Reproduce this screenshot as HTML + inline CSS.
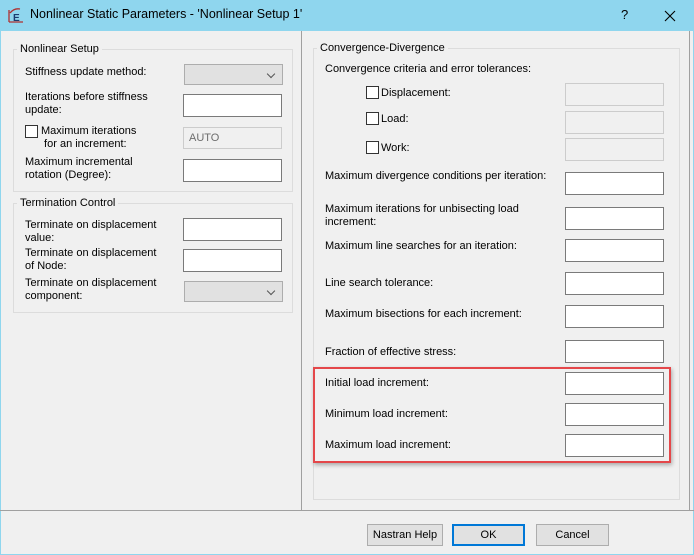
<!DOCTYPE html><html><head><style>
*{margin:0;padding:0;box-sizing:border-box}
body{width:694px;height:555px;background:#f0f0f0;font-family:"Liberation Sans",Tahoma,sans-serif;font-size:11px;color:#000;position:relative;overflow:hidden}
.a{position:absolute}
.t{position:absolute;line-height:13px;white-space:nowrap}
.g{position:absolute;border:1px solid #dcdcdc}
.lg{position:absolute;background:#f0f0f0;padding:0 3px;line-height:13px}
.in{position:absolute;background:#fff;border:1px solid #7a7a7a;width:99px;height:23px}
.dis{position:absolute;background:#f0f0f0;border:1px solid #cccccc;width:99px;height:23px}
.sel{position:absolute;background:#e1e1e1;border:1px solid #adadad;width:99px;height:21px}
.sel:after{content:"";position:absolute;right:8px;top:6px;width:5px;height:5px;border-right:1px solid #555;border-bottom:1px solid #555;transform:rotate(45deg)}
.cb{position:absolute;width:13px;height:13px;border:1px solid #333;background:#fff}
.btn{position:absolute;background:#e1e1e1;border:1px solid #adadad;height:22px;text-align:center;line-height:20px}
</style></head><body>
<div class="a" style="left:0;top:0;width:694px;height:31px;background:#8fd6ee"></div>
<div class="a" style="left:0;top:0;width:1px;height:555px;background:#8fd6ee"></div>
<div class="a" style="right:0;top:0;width:1px;height:555px;background:#8fd6ee"></div>
<div class="a" style="left:0;bottom:0;width:694px;height:1px;background:#8fd6ee"></div>
<svg class="a" style="left:8px;top:7px" width="16" height="16"><path d="M1 15V3M1 15H15M2 6Q6 1 12 2" stroke="#b03030" fill="none" stroke-width="1.3"/><text x="5" y="14" font-size="10" font-family="Liberation Sans" fill="#1a3c70" font-weight="bold">E</text></svg>
<div class="t" style="left:30px;top:8px;font-size:12.5px">Nonlinear Static Parameters - 'Nonlinear Setup 1'</div>
<div class="t" style="left:621px;top:8px;font-size:13px">?</div>
<svg class="a" style="left:664px;top:10px" width="12" height="12"><path d="M1 1L11 11M11 1L1 11" stroke="#000" stroke-width="1.1"/></svg>
<div class="a" style="left:301px;top:31px;width:1px;height:480px;background:#a0a0a0"></div>
<div class="a" style="left:689px;top:31px;width:1px;height:480px;background:#a0a0a0"></div>
<div class="a" style="left:0;top:510px;width:694px;height:1px;background:#a0a0a0"></div>

<div class="g" style="left:13px;top:49px;width:280px;height:143px"></div>
<div class="lg" style="left:17px;top:43px">Nonlinear Setup</div>
<div class="t" style="left:25px;top:66px">Stiffness update method:</div>
<div class="sel" style="left:184px;top:64px"></div>
<div class="t" style="left:25px;top:91px">Iterations before stiffness<br>update:</div>
<div class="in" style="left:183px;top:94px"></div>
<div class="cb" style="left:25px;top:125px"></div>
<div class="t" style="left:41px;top:125px">Maximum iterations<br>&nbsp;for an increment:</div>
<div class="dis" style="left:183px;top:127px;height:22px"><span class="t" style="left:5px;top:4px;color:#6d6d6d">AUTO</span></div>
<div class="t" style="left:25px;top:156px">Maximum incremental<br>rotation (Degree):</div>
<div class="in" style="left:183px;top:159px"></div>

<div class="g" style="left:13px;top:203px;width:280px;height:110px"></div>
<div class="lg" style="left:17px;top:197px">Termination Control</div>
<div class="t" style="left:25px;top:219px">Terminate on displacement<br>value:</div>
<div class="in" style="left:183px;top:218px"></div>
<div class="t" style="left:25px;top:247px">Terminate on displacement<br>of Node:</div>
<div class="in" style="left:183px;top:249px"></div>
<div class="t" style="left:25px;top:277px">Terminate on displacement<br>component:</div>
<div class="sel" style="left:184px;top:281px"></div>

<div class="g" style="left:313px;top:48px;width:367px;height:452px"></div>
<div class="lg" style="left:317px;top:42px">Convergence-Divergence</div>
<div class="t" style="left:325px;top:63px">Convergence criteria and error tolerances:</div>
<div class="cb" style="left:366px;top:86px"></div><div class="t" style="left:381px;top:87px">Displacement:</div>
<div class="dis" style="left:565px;top:83px;height:23px"></div>
<div class="cb" style="left:366px;top:112px"></div><div class="t" style="left:381px;top:113px">Load:</div>
<div class="dis" style="left:565px;top:111px;height:23px"></div>
<div class="cb" style="left:366px;top:141px"></div><div class="t" style="left:381px;top:142px">Work:</div>
<div class="dis" style="left:565px;top:138px;height:23px"></div>
<div class="t" style="left:325px;top:170px">Maximum divergence conditions per iteration:</div>
<div class="in" style="left:565px;top:172px"></div>
<div class="t" style="left:325px;top:203px">Maximum iterations for unbisecting load<br>increment:</div>
<div class="in" style="left:565px;top:207px"></div>
<div class="t" style="left:325px;top:240px">Maximum line searches for an iteration:</div>
<div class="in" style="left:565px;top:239px"></div>
<div class="t" style="left:325px;top:277px">Line search tolerance:</div>
<div class="in" style="left:565px;top:272px"></div>
<div class="t" style="left:325px;top:308px">Maximum bisections for each increment:</div>
<div class="in" style="left:565px;top:305px"></div>
<div class="t" style="left:325px;top:346px">Fraction of effective stress:</div>
<div class="in" style="left:565px;top:340px"></div>
<div class="t" style="left:325px;top:377px">Initial load increment:</div>
<div class="in" style="left:565px;top:372px"></div>
<div class="t" style="left:325px;top:408px">Minimum load increment:</div>
<div class="in" style="left:565px;top:403px"></div>
<div class="t" style="left:325px;top:439px">Maximum load increment:</div>
<div class="in" style="left:565px;top:434px"></div>
<div class="a" style="left:313px;top:367px;width:358px;height:96px;border:2px solid #e4474a;box-shadow:1px 2px 4px rgba(0,0,0,.3)"></div>

<div class="btn" style="left:367px;top:524px;width:76px">Nastran Help</div>
<div class="btn" style="left:452px;top:524px;width:73px;border:2px solid #0078d7;line-height:18px">OK</div>
<div class="btn" style="left:536px;top:524px;width:73px">Cancel</div>
</body></html>
